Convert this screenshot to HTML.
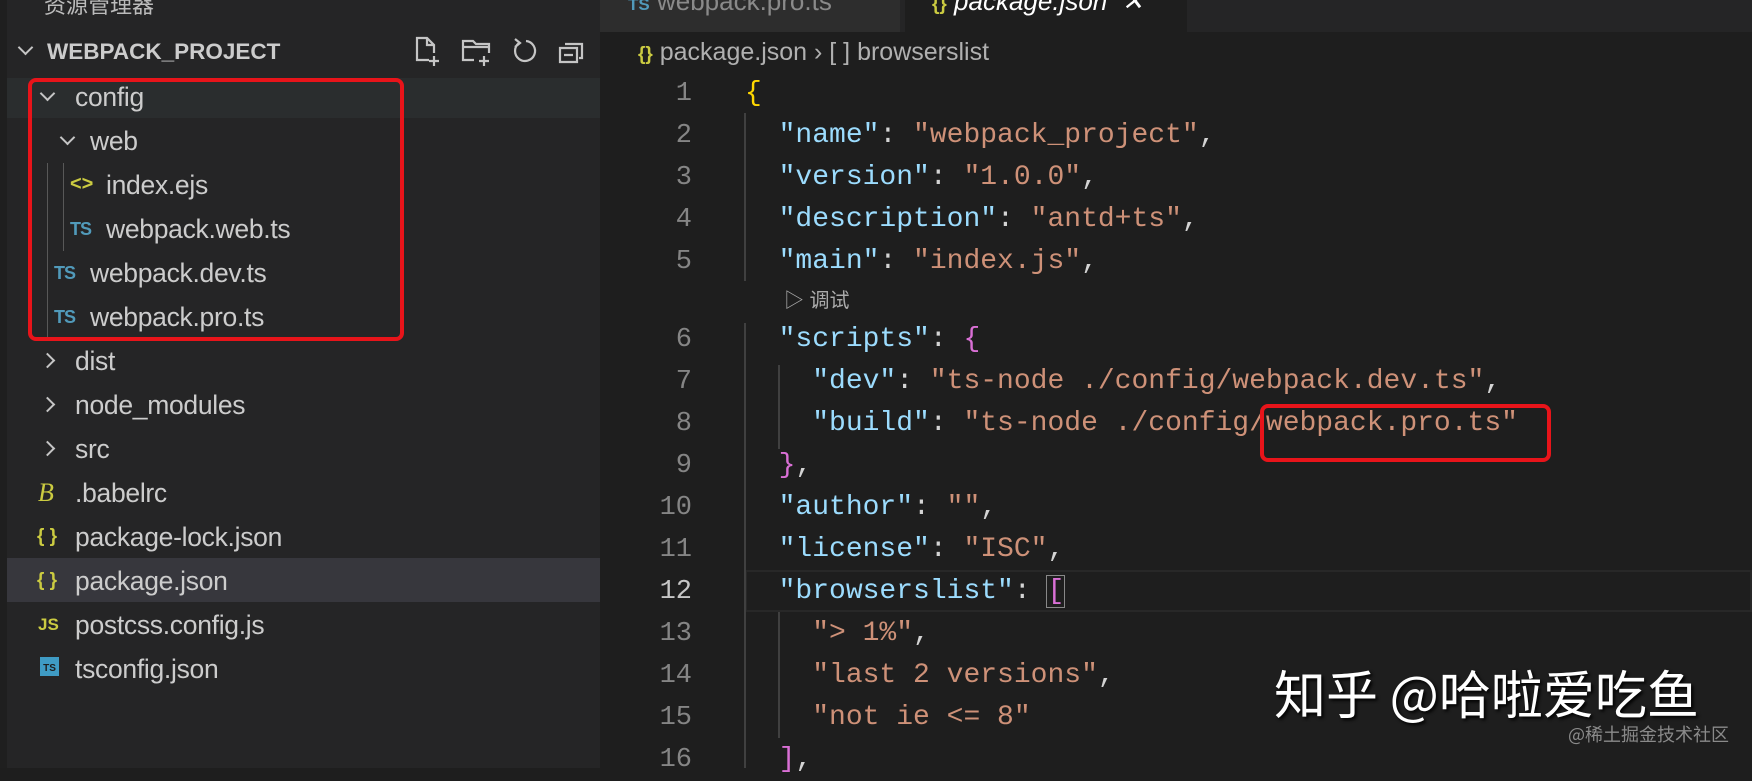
<!DOCTYPE html>
<html><head><meta charset="utf-8"><style>
*{margin:0;padding:0;box-sizing:border-box}
body{width:1752px;height:768px;overflow:hidden;background:#1e1e1e;position:relative;font-family:"Liberation Sans","Noto Sans CJK SC",sans-serif}
.a{position:absolute;white-space:nowrap}
#side{position:absolute;left:0;top:0;width:600px;height:768px;background:#252526}
.f{position:absolute;font-size:26.5px;color:#cccccc;line-height:44px;height:44px;white-space:nowrap;letter-spacing:-0.3px}
.chev{position:absolute;width:11px;height:11px;border-right:2px solid #c5c5c5;border-bottom:2px solid #c5c5c5}
.dn{transform:rotate(45deg)}
.rt{transform:rotate(-45deg)}
.ts{position:absolute;color:#519aba;font-weight:bold;font-size:18px;line-height:44px;letter-spacing:-1px}
.yl{position:absolute;color:#cbcb41;font-weight:bold;font-size:19px;line-height:44px}
.code{position:absolute;font-family:"Liberation Mono","DejaVu Sans Mono",monospace;font-size:28px;line-height:42px;white-space:pre;color:#d4d4d4}
.ln{position:absolute;font-family:"Liberation Mono",monospace;font-size:27px;line-height:42px;color:#858585;text-align:right;width:80px;left:612px}
.k{color:#9cdcfe}.s{color:#ce9178}.y{color:#ffd700}.m{color:#da70d6}
.g{position:absolute;width:2px;background:#404040}
</style></head><body>
<div id="side">
 <div class="a" style="left:0;top:0;width:7px;height:768px;background:#1f1f1f"></div>
 <div class="a" style="left:44px;top:-12px;font-size:22px;color:#bbb">资源管理器</div>
 <div class="chev dn" style="left:20px;top:42px"></div>
 <div class="a" style="left:47px;top:38px;font-size:22.5px;font-weight:bold;color:#cccccc;line-height:28px">WEBPACK_PROJECT</div>
 <svg class="a" style="left:412px;top:36px" width="175" height="30" viewBox="0 0 175 30" fill="none" stroke="#c5c5c5" stroke-width="2.2">
  <path d="M17 24H5V2h10l7 7v8M15 2v7h7M22 20v10M17 25h10"/>
  <path d="M62 24H51V5h10l3 3h13v9M51 11h26M72 20v10M67 25h10"/>
  <path d="M107 7a10 10 0 1 0 7-2M103 3l5 4-5 4" />
  <path d="M153 8h17v14h-3M148 12h17v14h-17zM152 19h9"/>
 </svg>
 <div class="a" style="left:7px;top:78px;width:593px;height:40px;background:#2a2d2e"></div>
 <div class="a" style="left:7px;top:558px;width:593px;height:44px;background:#37373d"></div>
 <div class="g" style="left:47px;top:163px;height:175px;background:#585858;width:1px"></div>
 <div class="g" style="left:63px;top:163px;height:88px;background:#585858;width:1px"></div>

 <div class="chev dn" style="left:42px;top:88px"></div><div class="f" style="left:75px;top:75px">config</div>
 <div class="chev dn" style="left:62px;top:132px"></div><div class="f" style="left:90px;top:119px">web</div>
 <div class="yl" style="left:70px;top:162px;font-size:20px">&lt;&gt;</div><div class="f" style="left:106px;top:163px">index.ejs</div>
 <div class="ts" style="left:70px;top:207px">TS</div><div class="f" style="left:106px;top:207px">webpack.web.ts</div>
 <div class="ts" style="left:54px;top:251px">TS</div><div class="f" style="left:90px;top:251px">webpack.dev.ts</div>
 <div class="ts" style="left:54px;top:295px">TS</div><div class="f" style="left:90px;top:295px">webpack.pro.ts</div>
 <div class="chev rt" style="left:42px;top:355px"></div><div class="f" style="left:75px;top:339px">dist</div>
 <div class="chev rt" style="left:42px;top:399px"></div><div class="f" style="left:75px;top:383px">node_modules</div>
 <div class="chev rt" style="left:42px;top:443px"></div><div class="f" style="left:75px;top:427px">src</div>
 <div class="yl" style="left:38px;top:471px;font-style:italic;font-family:'Liberation Serif',serif;font-size:26px;font-weight:normal">B</div><div class="f" style="left:75px;top:471px">.babelrc</div>
 <div class="yl" style="left:37px;top:515px">{ }</div><div class="f" style="left:75px;top:515px">package-lock.json</div>
 <div class="yl" style="left:37px;top:559px">{ }</div><div class="f" style="left:75px;top:559px">package.json</div>
 <div class="yl" style="left:38px;top:603px;font-size:17px">JS</div><div class="f" style="left:75px;top:603px">postcss.config.js</div>
 <div class="a" style="left:40px;top:657px;width:19px;height:19px;background:#3f9bc4;color:#1e1e1e;font-size:10px;font-weight:bold;text-align:center;line-height:24px">TS</div><div class="f" style="left:75px;top:647px">tsconfig.json</div>

 <div class="a" style="left:28px;top:78px;width:376px;height:263px;border:4px solid #e8141a;border-radius:8px"></div>
</div>

<div class="a" style="left:600px;top:0;width:1152px;height:32px;background:#252526"></div>
<div class="a" style="left:600px;top:0;width:300px;height:32px;background:#2d2d2d"></div>
<div class="a" style="left:628px;top:-14px;font-size:26px;color:#8a8a8a"><span style="color:#519aba;font-weight:bold;font-size:17px">TS</span> webpack.pro.ts</div>
<div class="a" style="left:905px;top:0;width:282px;height:32px;background:#1e1e1e"></div>
<div class="a" style="left:932px;top:-14px;font-size:26px;color:#fff;font-style:italic"><span style="color:#cbcb41;font-weight:bold;font-size:19px;font-style:normal">{}</span> package.json &nbsp;✕</div>

<div class="a" style="left:638px;top:38px;font-size:25px;color:#b0b0b0;line-height:28px"><span style="color:#cbcb41;font-weight:bold;font-size:19px">{}</span> package.json &#x203A; [ ] browserslist</div>

<div class="a" style="left:745px;top:570px;width:1007px;height:42px;border:2px solid #282828"></div>
<div class="g" style="left:744px;top:113px;height:168px"></div>
<div class="g" style="left:744px;top:323px;height:445px"></div>
<div class="g" style="left:778px;top:365px;height:84px"></div>
<div class="g" style="left:778px;top:612px;height:126px"></div>

<div class="ln" style="top:73px">1<br>2<br>3<br>4<br>5</div>
<div class="ln" style="top:319px">6<br>7<br>8<br>9<br>10<br>11<br><span style="color:#c6c6c6">12</span><br>13<br>14<br>15<br>16</div>
<div class="code" style="left:745px;top:73px"><span class="y">{</span>
  <span class="k">"name"</span>: <span class="s">"webpack_project"</span>,
  <span class="k">"version"</span>: <span class="s">"1.0.0"</span>,
  <span class="k">"description"</span>: <span class="s">"antd+ts"</span>,
  <span class="k">"main"</span>: <span class="s">"index.js"</span>,</div>
<div class="a" style="left:784px;top:287px;font-size:20px;color:#aaa;line-height:28px">▷ 调试</div>
<div class="code" style="left:745px;top:319px">  <span class="k">"scripts"</span>: <span class="m">{</span>
    <span class="k">"dev"</span>: <span class="s">"ts-node ./config/webpack.dev.ts"</span>,
    <span class="k">"build"</span>: <span class="s">"ts-node ./config/webpack.pro.ts"</span>
  <span class="m">}</span>,
  <span class="k">"author"</span>: <span class="s">""</span>,
  <span class="k">"license"</span>: <span class="s">"ISC"</span>,
  <span class="k">"browserslist"</span>: <span class="m" style="outline:1px solid #888">[</span>
    <span class="s">"&gt; 1%"</span>,
    <span class="s">"last 2 versions"</span>,
    <span class="s">"not ie &lt;= 8"</span>
  <span class="m">]</span>,</div>

<div class="a" style="left:1260px;top:404px;width:291px;height:58px;border:4px solid #e8141a;border-radius:8px"></div>

<div class="a" style="left:1274px;top:660px;font-size:52px;color:#fff;font-family:'Noto Sans CJK SC',sans-serif;line-height:64px;text-shadow:2px 2px 3px #000">知乎 @哈啦爱吃鱼</div>
<div class="a" style="left:1568px;top:722px;font-size:18px;color:#8a8a8a;font-family:'Noto Sans CJK SC',sans-serif;line-height:24px">@稀土掘金技术社区</div>
</body></html>
